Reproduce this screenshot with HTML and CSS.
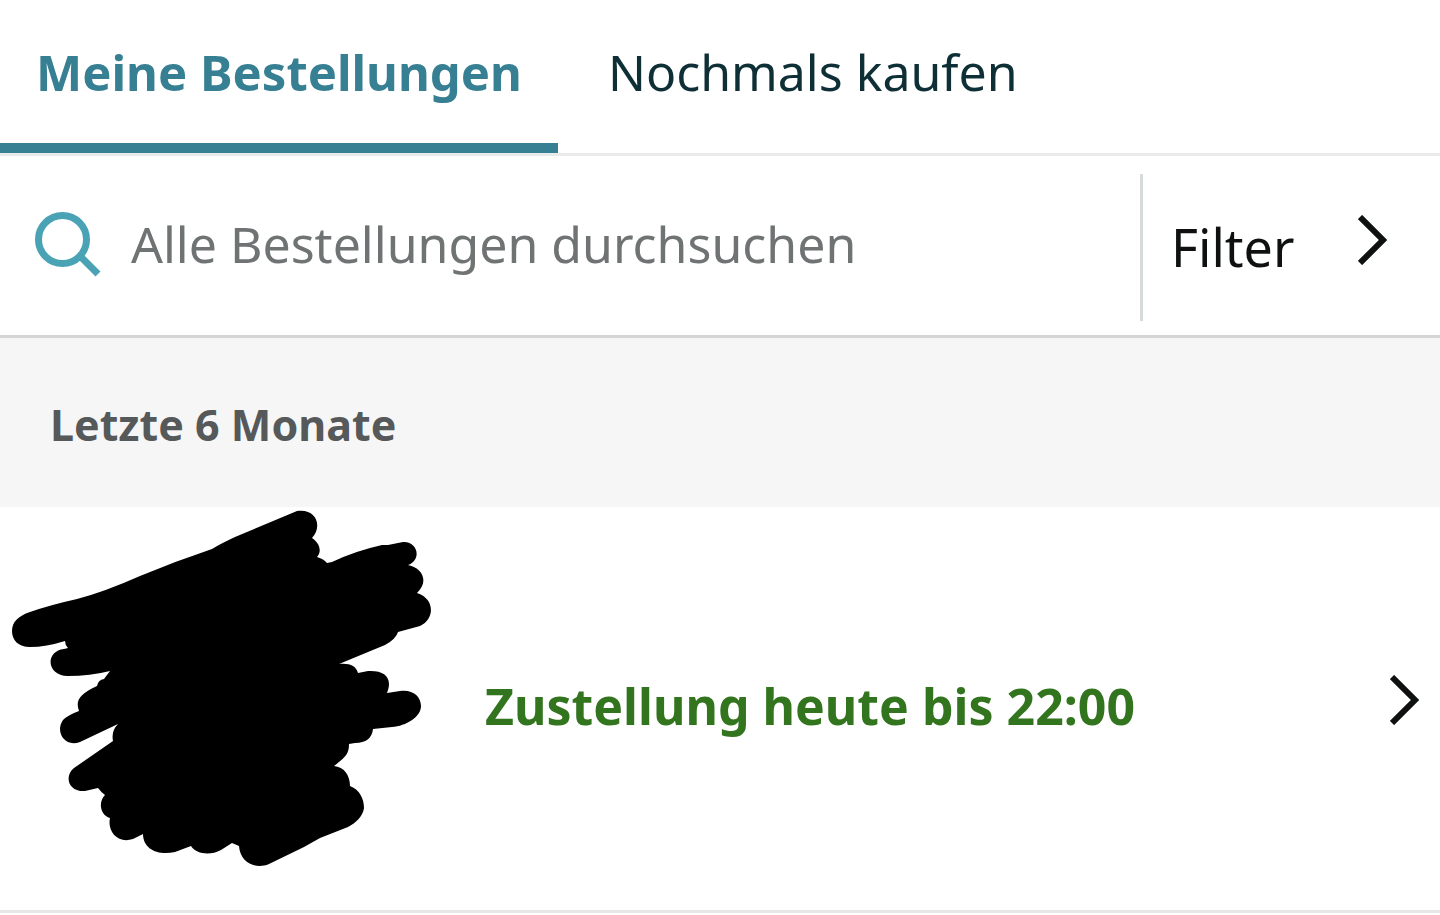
FILE: index.html
```html
<!DOCTYPE html>
<html lang="de">
<head>
    <meta charset="UTF-8">
    <meta name="viewport" content="width=device-width, initial-scale=1.0">
    <title>Meine Bestellungen</title>
    <link rel="stylesheet" href="styles.css">
</head>
<body>
<nav class="tabs">
    <a href="#" class="tab active">Meine Bestellungen</a>
    <a href="#" class="tab">Nochmals kaufen</a>
</nav>
<form class="search">
    <label class="search_icon" for="search" aria-label="Suche">
        <svg width="66" height="66" viewBox="0 0 66 66">
            <circle cx="27.5" cy="27.5" r="24"/>
            <path d="M45 44L63 62"/>
        </svg>
    </label>
    <input type="search" id="search" class="search_input" placeholder="Alle Bestellungen durchsuchen">
    <button type="button" class="filter">
        <span>Filter</span>
        <svg class="arrow" width="30" height="50" viewBox="0 0 30 50"><path d="M2 2L25 25L2 48"/></svg>
    </button>
</form>
<main>
    <h2 class="period">Letzte 6 Monate</h2>
    <ul class="orders">
        <li>
            <a href="#" class="order">
                <svg class="scribble" width="420" height="357" viewBox="12 510 420 357">
                    <path d="M12 631C12 622 18 616 30 612Q50 605 77 599Q104 592 140 576Q176 561 212 549Q220 544 235 537L297 511C316 508 323 526 312 538C320 543 322 552 317 557Q324 559 327 563L332 562Q355 551 382 545L388 545L403 542C418 541 422 560 408 565C423 568 429 582 417 593C434 598 436 618 420 626L398 632Q396 639 385 645L339 664C350 663 356 666 358 673L368 671C385 670 393 678 387 693L400 691C412 689 421 696 421 706C421 717 406 726 392 727L373 729C372 738 366 743 355 743L349 744C349 755 345 757 334 766C344 767 350 775 350 786C360 790 364 799 364 808C363 816 356 823 348 827L320 838L304 847L269 864C255 870 240 862 239 846L232 843L221 850C210 856 196 854 191 846L175 852C158 856 143 849 143 834L133 839C118 844 107 832 110 818C100 815 98 802 105 795Q101 792 98 788L85 791C68 792 64 776 74 768L113 741Q111 731 118 724L80 742C64 748 55 731 63 720Q68 715 79 711C75 700 80 694 97 686Q98 680 104 679L110 671Q90 676 68 676C46 676 45 651 64 649L68 648Q65 645 65 641Q46 647 30 647C18 647 12 640 12 631Z"/>
                </svg>
                <span class="status">Zustellung heute bis 22:00</span>
                <svg class="arrow" width="30" height="50" viewBox="0 0 30 50"><path d="M2 2L25 25L2 48"/></svg>
            </a>
        </li>
    </ul>
</main>
</body>
</html>
```

FILE: styles.css
```css
*{
    margin: 0;
    padding: 0;
    box-sizing: border-box;
    list-style: none;
}
body{
    background: #fff;
    color: #0f1111;
    font-family: "Noto Sans", "Open Sans", sans-serif;
    font-size: 50px;
    line-height: 72px;
}
a{
    color: inherit;
    text-decoration: none;
}
.tabs{
    display: flex;
    border-bottom: 3px solid #eaeaea;
}
.tab{
    padding: 36px 50px 35px;
    border-bottom: 10px solid transparent;
    color: #0f2f36;
    white-space: nowrap;
}
.tab.active{
    padding-left: 36px;
    padding-right: 36px;
    border-color: #377f93;
    color: #377f93;
    font-size: 49px;
    font-weight: bold;
}
.search{
    display: flex;
    align-items: center;
    padding: 18px 0 14px;
    border-bottom: 3px solid #d5d5d5;
}
.search_icon{
    padding: 0 30px 6px 35px;
}
.search_icon svg{
    display: block;
    fill: none;
    stroke: #4aa3b5;
    stroke-width: 7;
}
.search_input{
    flex: 1;
    min-width: 0;
    padding-bottom: 8px;
    border: 0;
    outline: none;
    background: none;
    font: inherit;
}
.search_input::placeholder{
    color: #6f7373;
    opacity: 1;
}
.filter{
    display: flex;
    align-items: center;
    justify-content: space-between;
    width: 300px;
    height: 147px;
    padding: 0 52px 2px 28px;
    border: 0;
    border-left: 3px solid #d5dbdb;
    background: none;
    color: inherit;
    font: inherit;
    font-size: 52px;
}
.arrow{
    flex: none;
    margin-bottom: 14px;
    fill: none;
    stroke: #0f1111;
    stroke-width: 6;
}
.period{
    padding: 57px 50px 52px;
    background: #f6f6f6;
    color: #565959;
    font-size: 43px;
    line-height: 60px;
}
.order{
    display: flex;
    align-items: center;
    padding: 0 20px 0 12px;
    border-bottom: 3px solid #e7e7e7;
}
.order .arrow{
    margin-bottom: 18px;
}
.scribble{
    flex: none;
    margin: 3px 53px 43px 0;
}
.status{
    flex: 1;
    padding-bottom: 6px;
    color: #32751e;
    font-weight: bold;
}
```
